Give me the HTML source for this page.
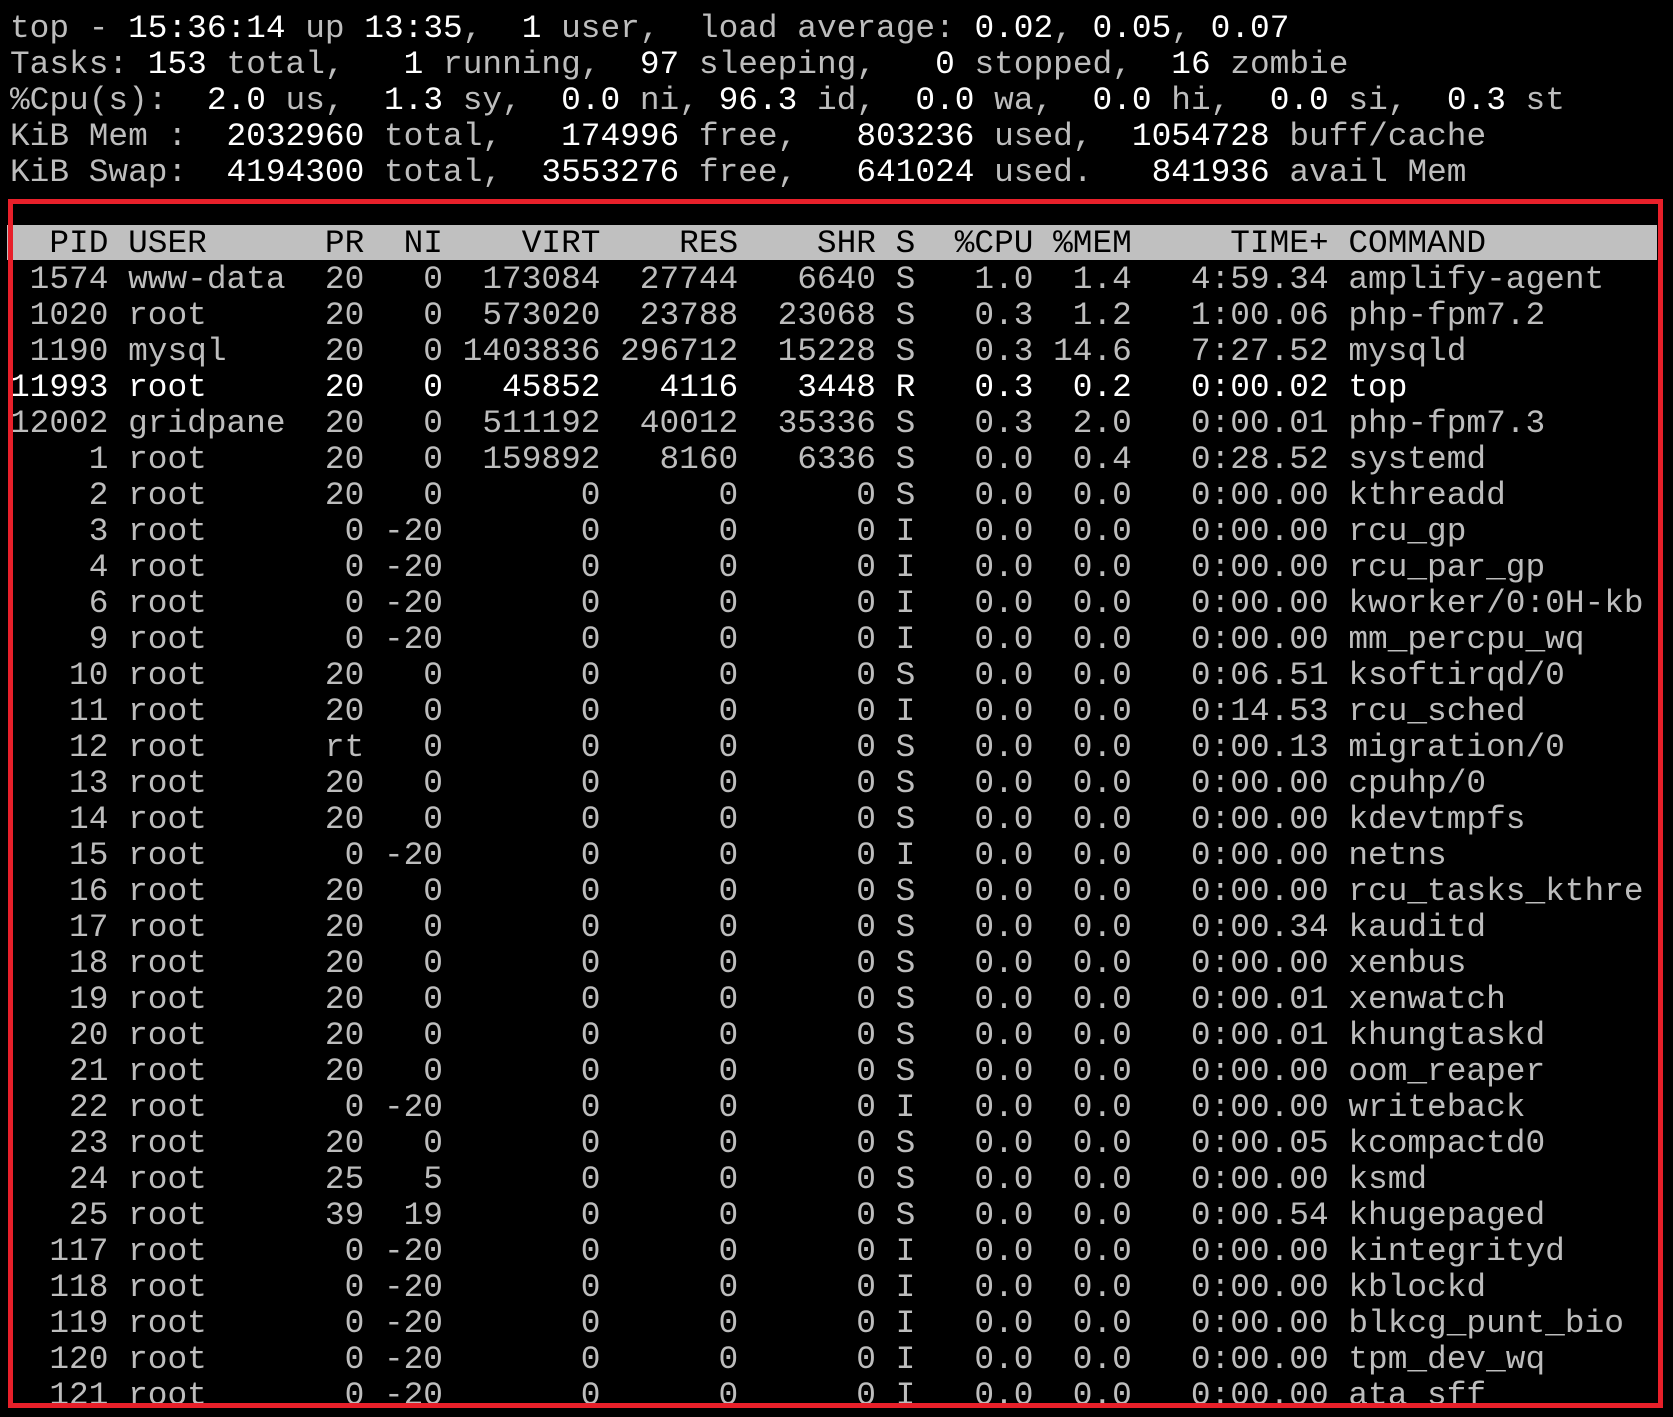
<!DOCTYPE html>
<html><head><meta charset="utf-8"><style>
html,body{margin:0;padding:0;background:#000;width:1673px;height:1417px;overflow:hidden;position:relative}
pre{margin:0;position:absolute;font-family:"Liberation Mono",monospace;font-size:32.8px;line-height:36px;color:#bdbdbd;white-space:pre}
.w{color:#fff}
#sum{left:10px;top:11px}
#bar{position:absolute;left:7px;top:225px;width:1650px;height:35px;background:#c0c0c0}
#hdr{left:10px;top:226px;color:#000}
#rows{left:10px;top:262px}
#clip{position:absolute;left:0;top:0;width:1673px;height:1404px;overflow:hidden}
#box{position:absolute;left:8px;top:199px;width:1645px;height:1199px;border:5px solid #e8202a}
</style></head><body>
<pre id="sum">top - <span class="w">15:36:14</span> up <span class="w">13:35</span>,  <span class="w">1</span> user,  load average: <span class="w">0.02</span>, <span class="w">0.05</span>, <span class="w">0.07</span>
Tasks: <span class="w">153</span> total,   <span class="w">1</span> running,  <span class="w">97</span> sleeping,   <span class="w">0</span> stopped,  <span class="w">16</span> zombie
%Cpu(s):  <span class="w">2.0</span> us,  <span class="w">1.3</span> sy,  <span class="w">0.0</span> ni, <span class="w">96.3</span> id,  <span class="w">0.0</span> wa,  <span class="w">0.0</span> hi,  <span class="w">0.0</span> si,  <span class="w">0.3</span> st
KiB Mem :  <span class="w">2032960</span> total,   <span class="w">174996</span> free,   <span class="w">803236</span> used,  <span class="w">1054728</span> buff/cache
KiB Swap:  <span class="w">4194300</span> total,  <span class="w">3553276</span> free,   <span class="w">641024</span> used.   <span class="w">841936</span> avail Mem</pre>
<div id="bar"></div>
<pre id="hdr">  PID USER      PR  NI    VIRT    RES    SHR S  %CPU %MEM     TIME+ COMMAND</pre>
<div id="clip">
<pre id="rows"> 1574 www-data  20   0  173084  27744   6640 S   1.0  1.4   4:59.34 amplify-agent
 1020 root      20   0  573020  23788  23068 S   0.3  1.2   1:00.06 php-fpm7.2
 1190 mysql     20   0 1403836 296712  15228 S   0.3 14.6   7:27.52 mysqld
<span class="w">11993 root      20   0   45852   4116   3448 R   0.3  0.2   0:00.02 top</span>
12002 gridpane  20   0  511192  40012  35336 S   0.3  2.0   0:00.01 php-fpm7.3
    1 root      20   0  159892   8160   6336 S   0.0  0.4   0:28.52 systemd
    2 root      20   0       0      0      0 S   0.0  0.0   0:00.00 kthreadd
    3 root       0 -20       0      0      0 I   0.0  0.0   0:00.00 rcu_gp
    4 root       0 -20       0      0      0 I   0.0  0.0   0:00.00 rcu_par_gp
    6 root       0 -20       0      0      0 I   0.0  0.0   0:00.00 kworker/0:0H-kb
    9 root       0 -20       0      0      0 I   0.0  0.0   0:00.00 mm_percpu_wq
   10 root      20   0       0      0      0 S   0.0  0.0   0:06.51 ksoftirqd/0
   11 root      20   0       0      0      0 I   0.0  0.0   0:14.53 rcu_sched
   12 root      rt   0       0      0      0 S   0.0  0.0   0:00.13 migration/0
   13 root      20   0       0      0      0 S   0.0  0.0   0:00.00 cpuhp/0
   14 root      20   0       0      0      0 S   0.0  0.0   0:00.00 kdevtmpfs
   15 root       0 -20       0      0      0 I   0.0  0.0   0:00.00 netns
   16 root      20   0       0      0      0 S   0.0  0.0   0:00.00 rcu_tasks_kthre
   17 root      20   0       0      0      0 S   0.0  0.0   0:00.34 kauditd
   18 root      20   0       0      0      0 S   0.0  0.0   0:00.00 xenbus
   19 root      20   0       0      0      0 S   0.0  0.0   0:00.01 xenwatch
   20 root      20   0       0      0      0 S   0.0  0.0   0:00.01 khungtaskd
   21 root      20   0       0      0      0 S   0.0  0.0   0:00.00 oom_reaper
   22 root       0 -20       0      0      0 I   0.0  0.0   0:00.00 writeback
   23 root      20   0       0      0      0 S   0.0  0.0   0:00.05 kcompactd0
   24 root      25   5       0      0      0 S   0.0  0.0   0:00.00 ksmd
   25 root      39  19       0      0      0 S   0.0  0.0   0:00.54 khugepaged
  117 root       0 -20       0      0      0 I   0.0  0.0   0:00.00 kintegrityd
  118 root       0 -20       0      0      0 I   0.0  0.0   0:00.00 kblockd
  119 root       0 -20       0      0      0 I   0.0  0.0   0:00.00 blkcg_punt_bio
  120 root       0 -20       0      0      0 I   0.0  0.0   0:00.00 tpm_dev_wq
  121 root       0 -20       0      0      0 I   0.0  0.0   0:00.00 ata_sff</pre>
</div>
<div id="box"></div>
</body></html>
